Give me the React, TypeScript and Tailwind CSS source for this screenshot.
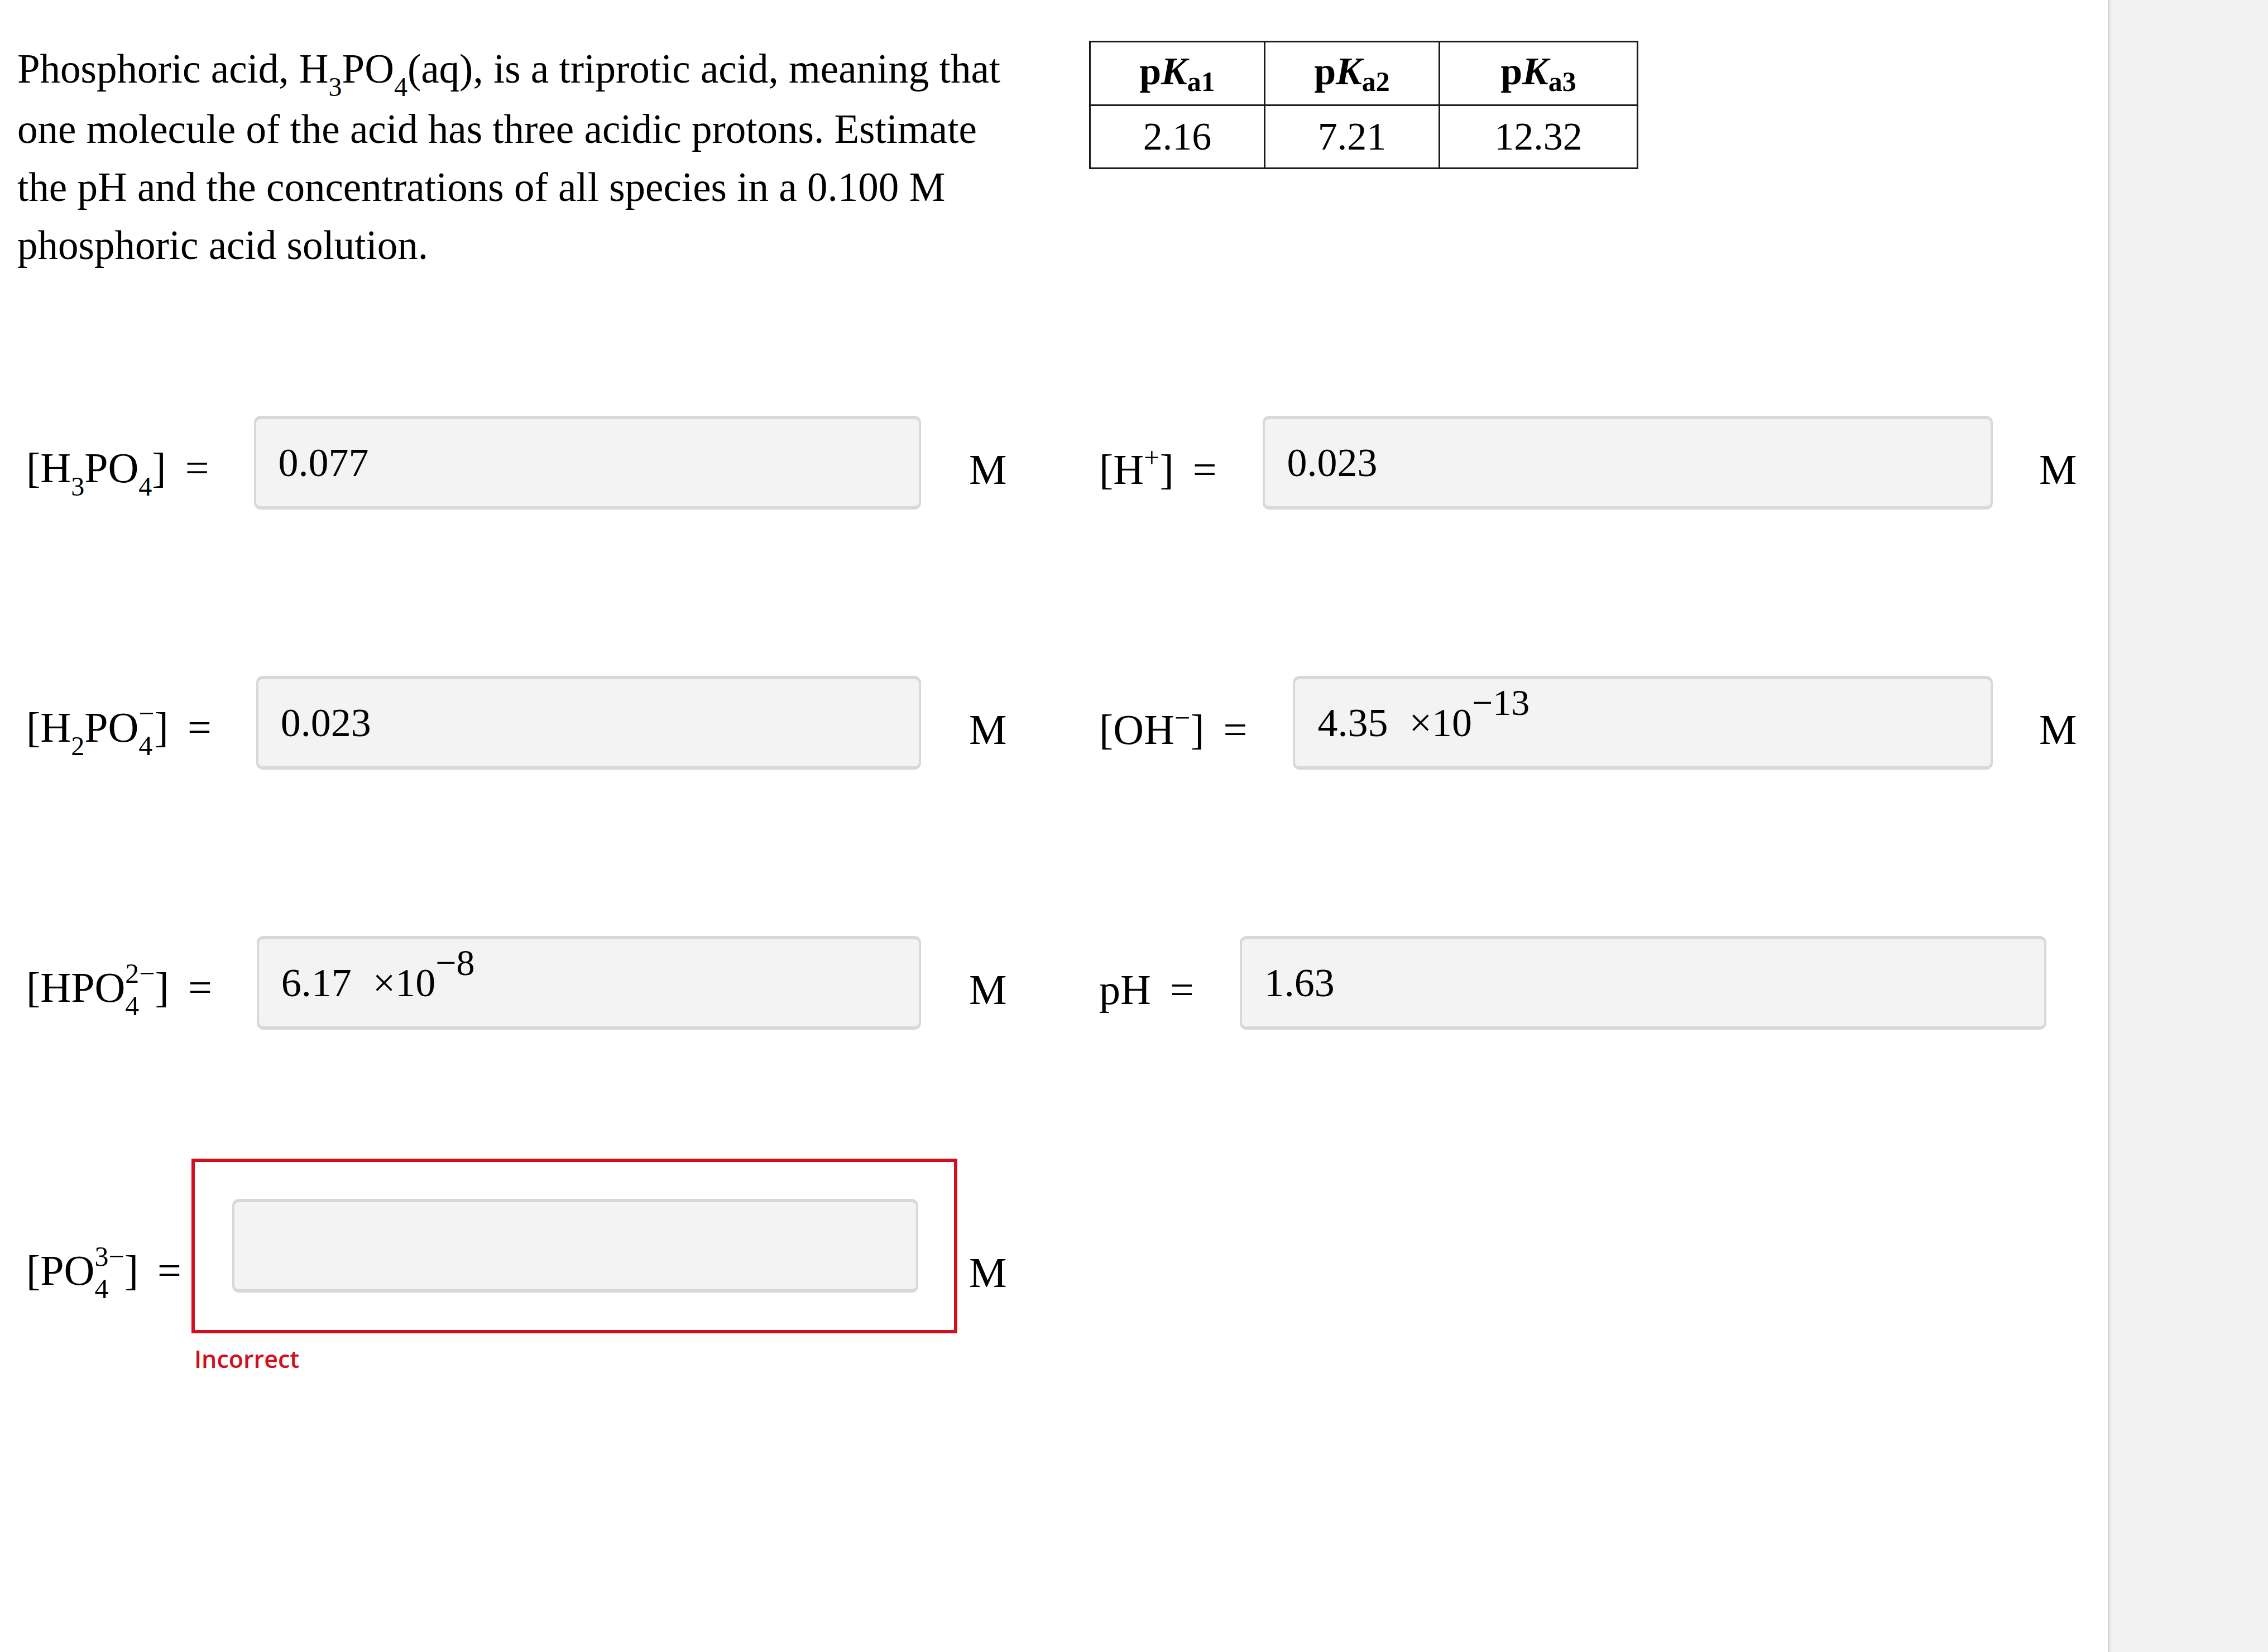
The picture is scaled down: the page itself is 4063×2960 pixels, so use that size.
import React from "react";

const Sub = ({ children }: { children: React.ReactNode }) => (
  <span className="text-[48px] leading-none align-[-24px]">{children}</span>
);

const Sup = ({ children }: { children: React.ReactNode }) => (
  <span className="text-[50px] leading-none align-[30px]">{children}</span>
);

const Stack = ({ sup, sub }: { sup: React.ReactNode; sub: React.ReactNode }) => (
  <span className="inline-flex flex-col align-[34px] text-[50px] leading-[58px]">
    <span>{sup}</span>
    <span>{sub}</span>
  </span>
);

const Eq = () => <span className="ml-[34px]">=</span>;

const Box = ({ children, className = "" }: { children?: React.ReactNode; className?: string }) => (
  <div
    className={`h-[168px] flex items-center pl-[40px] bg-[#f3f3f3] border-[4px] border-t-[6px] border-b-[6px] border-[#d8d8d8] rounded-[12px] text-[72px] leading-none ${className}`}
  >
    {children}
  </div>
);

const Sci = ({ m, e }: { m: string; e: string }) => (
  <span className="whitespace-nowrap">
    {m}
    <span className="ml-[38px]">×10</span>
    <span className="relative -top-[38px] text-[66px] leading-none">{e}</span>
  </span>
);

const Label = ({ children, className = "" }: { children: React.ReactNode; className?: string }) => (
  <span className={`whitespace-nowrap text-[76px] leading-[104px] ${className}`}>{children}</span>
);

export default function App() {
  return (
    <div className="w-full h-[2960px] flex bg-white text-black font-['Liberation_Serif','Times_New_Roman',serif] overflow-hidden">
      <main className="flex-1 pl-[31px] pt-[72px]">
        {/* Top: paragraph + table */}
        <div className="flex items-start">
          <p className="w-[1790px] text-[73px] leading-[104px] whitespace-nowrap">
            Phosphoric acid, H<Sub>3</Sub>PO<Sub>4</Sub>(aq), is a triprotic acid, meaning that
            <br />
            one molecule of the acid has three acidic protons. Estimate
            <br />
            the pH and the concentrations of all species in a 0.100 M
            <br />
            phosphoric acid solution.
          </p>
          <table className="ml-[130px] mt-[1px] border-collapse border-[3px] border-[#1a1a1a] text-[70px] leading-none">
            <tbody>
              <tr className="h-[114px]">
                {["1", "2", "3"].map((n, i) => (
                  <td
                    key={n}
                    className={`border-[3px] border-[#1a1a1a] text-center font-bold ${i === 2 ? "w-[355px]" : "w-[313px]"}`}
                  >
                    p<i>K</i>
                    <span className="text-[50px] align-[-12px]">a{n}</span>
                  </td>
                ))}
              </tr>
              <tr className="h-[113px]">
                {["2.16", "7.21", "12.32"].map((v) => (
                  <td key={v} className="border-[3px] border-[#1a1a1a] text-center">
                    {v}
                  </td>
                ))}
              </tr>
            </tbody>
          </table>
        </div>

        {/* Rows */}
        <div className="mt-[253px] flex flex-col">
          {/* Row 1 */}
          <div className="flex h-[168px]">
            <div className="w-[1938px] pl-[16px] flex items-center">
              <div className="w-[1603px] flex items-center">
                <Label className="pt-[24px]">
                  [H<Sub>3</Sub>PO<Sub>4</Sub>]<Eq />
                </Label>
                <Box className="ml-[80px] flex-1">0.077</Box>
              </div>
              <Label className="ml-[86px] pt-[24px]">M</Label>
            </div>
            <div className="flex items-center">
              <div className="w-[1601px] flex items-center">
                <Label className="pt-[24px]">
                  [H<Sup>+</Sup>]<Eq />
                </Label>
                <Box className="ml-[82px] flex-1">0.023</Box>
              </div>
              <Label className="ml-[83px] pt-[24px]">M</Label>
            </div>
          </div>

          {/* Row 2 */}
          <div className="flex h-[168px] mt-[298px]">
            <div className="w-[1938px] pl-[16px] flex items-center">
              <div className="w-[1603px] flex items-center">
                <Label className="pt-[24px]">
                  [H<Sub>2</Sub>PO<Stack sup="−" sub="4" />]<Eq />
                </Label>
                <Box className="ml-[80px] flex-1">0.023</Box>
              </div>
              <Label className="ml-[86px] pt-[24px]">M</Label>
            </div>
            <div className="flex items-center">
              <div className="w-[1601px] flex items-center">
                <Label className="pt-[24px]">
                  [OH<Sup>−</Sup>]<Eq />
                </Label>
                <Box className="ml-[82px] flex-1">
                  <Sci m="4.35" e="−13" />
                </Box>
              </div>
              <Label className="ml-[83px] pt-[24px]">M</Label>
            </div>
          </div>

          {/* Row 3 */}
          <div className="flex h-[168px] mt-[298px]">
            <div className="w-[1938px] pl-[16px] flex items-center">
              <div className="w-[1603px] flex items-center">
                <Label className="pt-[24px]">
                  [HPO<Stack sup="2−" sub="4" />]<Eq />
                </Label>
                <Box className="ml-[80px] flex-1">
                  <Sci m="6.17" e="−8" />
                </Box>
              </div>
              <Label className="ml-[86px] pt-[24px]">M</Label>
            </div>
            <div className="flex items-center">
              <div className="w-[1697px] flex items-center">
                <Label className="pt-[24px]">
                  pH<Eq />
                </Label>
                <Box className="ml-[82px] flex-1">1.63</Box>
              </div>
            </div>
          </div>

          {/* Row 4 */}
          <div className="mt-[231px] flex flex-col">
            <div className="w-[1938px] pl-[16px] flex items-center">
              <div className="w-[1668px] flex items-center">
                <Label className="pt-[94px]">
                  [PO<Stack sup="3−" sub="4" />]<Eq />
                </Label>
                <div className="ml-[18px] flex-1 border-[6px] border-[#d0101e] pt-[66px] pb-[67px] pl-[67px] pr-[64px]">
                  <Box />
                </div>
              </div>
              <Label className="ml-[21px] pt-[94px]">M</Label>
            </div>
            <div className="pl-[317px] mt-[18px] text-[43px] leading-[56px] font-semibold text-[#d0101e] font-['Open_Sans',sans-serif]">
              Incorrect
            </div>
          </div>
        </div>
      </main>
      <aside className="w-[287px] h-full border-l-[3px] border-[#d4d4d4] bg-[#f2f2f2] shadow-[inset_6px_0_8px_-6px_rgba(0,0,0,0.08)]" />
    </div>
  );
}
